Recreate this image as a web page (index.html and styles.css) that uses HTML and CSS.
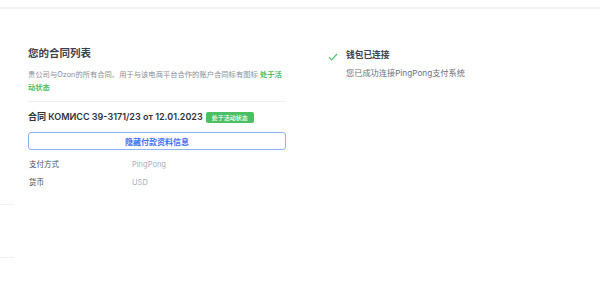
FILE: index.html
```html
<!DOCTYPE html>
<html lang="zh">
<head>
    <meta charset="UTF-8">
    <title>合同列表</title>
    <link rel="stylesheet" href="styles.css">
</head>
<body>
    <div class="topbar"></div>
    <div class="page">
        <div class="side">
            <div class="side-line"></div>
            <div class="side-line second"></div>
        </div>
        <div class="contracts">
            <div class="title">您的合同列表</div>
            <div class="desc">贵公司与Ozon的所有合同。用于与该电商平台合作的账户合同标有图标 <span class="green">处于活动状态</span></div>
            <div class="divider"></div>
            <div class="contract-head">
                <span>合同 КОМИСС 39-3171/23 от 12.01.2023</span>
                <span class="badge">处于活动状态</span>
            </div>
            <button class="toggle">隐藏付款资料信息</button>
            <div class="row">
                <span class="label">支付方式</span>
                <span class="value">PingPong</span>
            </div>
            <div class="row">
                <span class="label">货币</span>
                <span class="value">USD</span>
            </div>
        </div>
        <div class="wallet">
            <svg class="check" width="10" height="8" viewBox="0 0 10 8">
                <path d="M1 4.2 L3.6 6.8 L9 1" fill="none" stroke="#4fbf6b" stroke-width="1.2"/>
            </svg>
            <div>
                <div class="wallet-title">钱包已连接</div>
                <div class="wallet-text">您已成功连接PingPong支付系统</div>
            </div>
        </div>
    </div>
</body>
</html>
```

FILE: styles.css
```css
body {
    margin: 0;
    background: #fff;
    font-family: "Inter", "Noto Sans CJK SC", sans-serif;
    color: #3b404c;
}

.topbar {
    height: 7px;
    border-bottom: 2px solid #f1f2f5;
}

.page {
    display: flex;
}

.side {
    width: 14px;
    margin-right: 14px;
    padding-top: 195px;
}

.side-line {
    height: 1px;
    background: #f1f1f3;
}

.side-line.second {
    margin-top: 52px;
}

.contracts {
    width: 258px;
    padding-top: 38px;
}

.title {
    font-size: 10.5px;
    line-height: 14px;
    font-weight: 700;
}

.desc {
    margin-top: 7px;
    font-size: 7.3px;
    line-height: 13px;
    color: #8a8e96;
}

.green {
    color: #4cbf63;
    font-weight: 700;
}

.divider {
    margin-top: 7px;
    height: 1px;
    background: #eeeff1;
}

.contract-head {
    margin-top: 8px;
    display: flex;
    align-items: center;
    gap: 3px;
    font-size: 9px;
    line-height: 14px;
    font-weight: 600;
    color: #2e323a;
}

.badge {
    background: #4cbf63;
    color: #fff;
    font-size: 6px;
    line-height: 11px;
    padding: 0 6px;
    border-radius: 2px;
    font-weight: 500;
}

.toggle {
    display: block;
    width: 100%;
    height: 18px;
    margin-top: 8px;
    padding: 0;
    border: 1px solid #8fb2f7;
    border-radius: 3px;
    background: #fff;
    color: #3e6ff2;
    font-family: "Inter", "Noto Sans CJK SC", sans-serif;
    font-size: 8px;
    font-weight: 700;
}

.row {
    display: flex;
    font-size: 7.5px;
    line-height: 11px;
    margin-top: 7px;
}

.toggle + .row {
    margin-top: 9px;
}

.label {
    width: 103px;
    padding-left: 1px;
    color: #4a4e57;
}

.value {
    color: #a9adb4;
}

.wallet {
    margin-left: 42px;
    padding-top: 40px;
    display: flex;
    gap: 8px;
}

.check {
    margin-top: 4px;
}

.wallet-title {
    font-size: 8.7px;
    line-height: 12px;
    font-weight: 700;
    color: #3b404c;
}

.wallet-text {
    margin-top: 6px;
    font-size: 8.2px;
    line-height: 12px;
    color: #6c707a;
}
```
